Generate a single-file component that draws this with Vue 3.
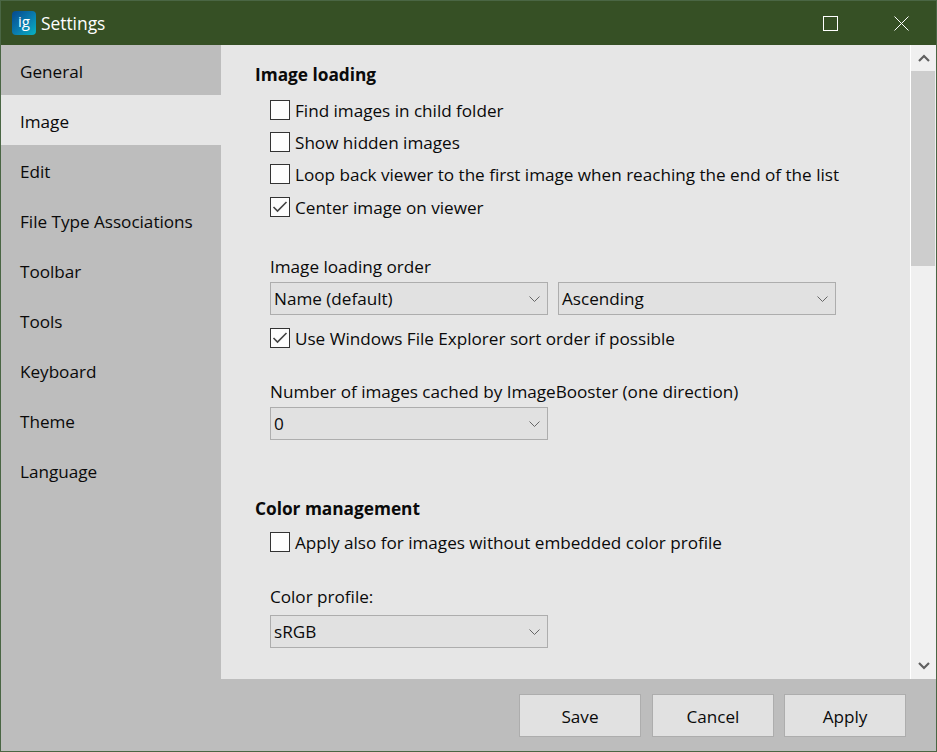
<script setup>
const nav = ['General', 'Image', 'Edit', 'File Type Associations', 'Toolbar', 'Tools', 'Keyboard', 'Theme', 'Language']
const active = 'Image'
const loading = [
  { label: 'Find images in child folder', on: false },
  { label: 'Show hidden images', on: false },
  { label: 'Loop back viewer to the first image when reaching the end of the list', on: false },
  { label: 'Center image on viewer', on: true }
]
</script>

<template>
  <div class="window">
    <header class="titlebar">
      <div class="logo"><span>ig</span></div>
      <div class="title">Settings</div>
      <div class="controls">
        <svg class="ctl" width="15" height="15" viewBox="0 0 15 15"><rect x="0.5" y="0.5" width="14" height="14" fill="none" stroke="#fff" stroke-width="1" /></svg>
        <svg class="ctl" width="15" height="15" viewBox="0 0 15 15"><path d="M0.5 0.5 14.5 14.5M14.5 0.5 0.5 14.5" fill="none" stroke="#fff" stroke-width="1" /></svg>
      </div>
    </header>
    <div class="body">
      <nav class="sidebar">
        <div v-for="n in nav" :key="n" class="nav-item" :class="{ active: n === active }">{{ n }}</div>
      </nav>
      <main class="content">
        <div class="scroll">
          <h2 class="heading">Image loading</h2>
          <div class="checks">
            <label v-for="c in loading" :key="c.label" class="check">
              <span class="box">
                <svg v-if="c.on" width="18" height="18" viewBox="0 0 18 18"><path d="M2.5 9 6.5 13 15.5 4" fill="none" stroke="#444" stroke-width="1.6" /></svg>
              </span>
              {{ c.label }}
            </label>
          </div>
          <div class="field-label first">Image loading order</div>
          <div class="selects">
            <div class="select">Name (default)<svg class="chev" width="11" height="6" viewBox="0 0 11 6"><path d="M0.5 0.5 5.5 5.5 10.5 0.5" fill="none" stroke="#666" /></svg></div>
            <div class="select">Ascending<svg class="chev" width="11" height="6" viewBox="0 0 11 6"><path d="M0.5 0.5 5.5 5.5 10.5 0.5" fill="none" stroke="#666" /></svg></div>
          </div>
          <label class="check single">
            <span class="box"><svg width="18" height="18" viewBox="0 0 18 18"><path d="M2.5 9 6.5 13 15.5 4" fill="none" stroke="#444" stroke-width="1.6" /></svg></span>
            Use Windows File Explorer sort order if possible
          </label>
          <div class="field-label cached">Number of images cached by ImageBooster (one direction)</div>
          <div class="selects tight">
            <div class="select">0<svg class="chev" width="11" height="6" viewBox="0 0 11 6"><path d="M0.5 0.5 5.5 5.5 10.5 0.5" fill="none" stroke="#666" /></svg></div>
          </div>
          <h2 class="heading color">Color management</h2>
          <label class="check single nogap">
            <span class="box"></span>
            Apply also for images without embedded color profile
          </label>
          <div class="field-label profile">Color profile:</div>
          <div class="selects low">
            <div class="select">sRGB<svg class="chev" width="11" height="6" viewBox="0 0 11 6"><path d="M0.5 0.5 5.5 5.5 10.5 0.5" fill="none" stroke="#666" /></svg></div>
          </div>
        </div>
        <div class="scrollbar">
          <div class="arrow"><svg width="12" height="8" viewBox="0 0 12 8"><path d="M1 7 6 2 11 7" fill="none" stroke="#606060" stroke-width="2.2" /></svg></div>
          <div class="track"><div class="thumb"></div></div>
          <div class="arrow"><svg width="12" height="8" viewBox="0 0 12 8"><path d="M1 1 6 6 11 1" fill="none" stroke="#606060" stroke-width="2.2" /></svg></div>
        </div>
      </main>
    </div>
    <footer class="footer">
      <button class="btn">Save</button>
      <button class="btn">Cancel</button>
      <button class="btn last">Apply</button>
    </footer>
  </div>
</template>

<style>
html, body { margin: 0; background: #bdbdbd; }
</style>

<style scoped>
.window {
  width: 937px;
  height: 752px;
  box-sizing: border-box;
  border: 1px solid #4a6644;
  background: #bdbdbd;
  display: flex;
  flex-direction: column;
  font-family: "Open Sans", "Noto Sans", sans-serif;
  font-size: 17.15px;
  letter-spacing: -0.02px;
  color: #0a0a0a;
  overflow: hidden;
}
.titlebar {
  height: 44px;
  flex: none;
  background: #365025;
  color: #fff;
  display: flex;
  align-items: center;
  padding-left: 11px;
}
.logo {
  width: 24px;
  height: 24px;
  border-radius: 4px;
  background: linear-gradient(135deg, #05488e 0%, #0a7fb0 55%, #08b4c2 100%);
  color: #fff;
  display: flex;
  align-items: center;
  justify-content: center;
  font-size: 15px;
  line-height: 1;
  padding-bottom: 4px;
  box-sizing: border-box;
}
.title {
  margin-left: 5px;
  font-size: 17.4px;
}
.controls {
  margin-left: auto;
  display: flex;
  align-items: center;
  gap: 56px;
  padding-right: 27px;
}
.ctl { display: block; }
.body {
  flex: 1;
  display: flex;
  min-height: 0;
}
.sidebar {
  width: 220px;
  flex: none;
}
.nav-item {
  height: 50px;
  display: flex;
  align-items: center;
  padding: 2px 0 0 19px;
  box-sizing: border-box;
}
.nav-item.active { background: #e6e6e6; }
.content {
  flex: 1;
  display: flex;
  background: #e6e6e6;
  min-width: 0;
}
.scroll {
  flex: 1;
  padding: 18px 0 0 34px;
  box-sizing: border-box;
  overflow: hidden;
  border-right: 1px solid #fff;
}
.heading {
  margin: 0;
  font-size: 17.3px;
  font-weight: 700;
  line-height: 24px;
}
.heading.color { margin-top: 57px; }
.checks {
  display: flex;
  flex-direction: column;
  margin-top: 11px;
  padding-left: 15px;
  gap: 8px;
}
.check {
  display: flex;
  align-items: center;
  gap: 5px;
  height: 24px;
  white-space: nowrap;
}
.check:last-child { margin-top: 1px; }
.check.single { margin-left: 15px; margin-top: 11px; }
.check.single.nogap { margin-top: 9px; }
.box {
  width: 20px;
  height: 20px;
  box-sizing: border-box;
  flex: none;
  border: 1px solid #333;
  background: #fdfdfd;
  display: flex;
  align-items: center;
  justify-content: center;
}
.field-label {
  margin-left: 15px;
  line-height: 24px;
}
.field-label.first { margin-top: 36px; }
.field-label.cached { margin-top: 30px; }
.field-label.profile { margin-top: 31px; }
.selects {
  display: flex;
  gap: 10px;
  margin-left: 15px;
  margin-top: 3px;
}
.selects.tight { margin-top: 3px; }
.selects.low { margin-top: 6px; }
.select {
  width: 278px;
  height: 33px;
  box-sizing: border-box;
  border: 1px solid #adadad;
  background: #e1e1e1;
  display: flex;
  align-items: center;
  padding-left: 3px;
  position: relative;
}
.chev {
  position: absolute;
  right: 7px;
  top: 13px;
}
.scrollbar {
  width: 25px;
  flex: none;
  background: #f0f0f0;
  display: flex;
  flex-direction: column;
}
.arrow {
  height: 26px;
  flex: none;
  display: flex;
  align-items: center;
  justify-content: center;
}
.track {
  flex: 1;
  padding-right: 1px;
}
.thumb {
  height: 195px;
  background: #cdcdcd;
}
.footer {
  height: 72px;
  flex: none;
  display: flex;
  align-items: flex-start;
  justify-content: flex-end;
  gap: 11px;
  padding: 15px 30px 0 0;
  box-sizing: border-box;
}
.btn {
  width: 122px;
  height: 43px;
  box-sizing: border-box;
  border: 1px solid #adadad;
  background: #e1e1e1;
  font: inherit;
  letter-spacing: inherit;
  color: inherit;
  padding: 1px 0 0;
}
.btn.last { margin-left: -1px; }
</style>
